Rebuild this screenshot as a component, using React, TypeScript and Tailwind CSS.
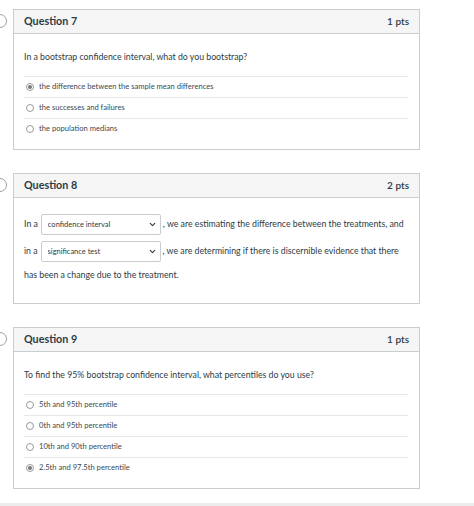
import { ChevronDown } from 'lucide-react';

type Option = { label: string; checked?: boolean };

function Radio({ checked }: { checked?: boolean }) {
  return (
    <span className="w-[8px] h-[8px] rounded-full border border-[#9a9a9a] bg-white flex items-center justify-center shrink-0">
      {checked && <span className="w-[4px] h-[4px] rounded-full bg-[#777]" />}
    </span>
  );
}

function QuestionCard({ title, points, children }: { title: string; points: string; children: React.ReactNode }) {
  return (
    <div className="relative">
      {/* flag marker, clipped by the page edge */}
      <span className="absolute left-[-20px] top-[5px] w-[14px] h-[14px] rounded-full border border-[#9aa0a6] bg-white" />
      <div className="border border-[#c7cdd1] bg-white">
        <div className="h-[24px] bg-[#f5f5f5] border-b border-[#c7cdd1] flex items-center justify-between px-[10px]">
          <span className="text-[10.75px] font-bold text-[#2d3b45]">{title}</span>
          <span className="text-[10px] font-semibold text-[#2d3b45]">{points}</span>
        </div>
        {children}
      </div>
    </div>
  );
}

function OptionList({ options }: { options: Option[] }) {
  return (
    <div>
      {options.map((o) => (
        <div key={o.label} className="h-[21px] border-t border-[#e6e6e6] flex items-center gap-[5px] pl-[2px]">
          <Radio checked={o.checked} />
          <span className="text-[7.6px] text-[#3b4850]">{o.label}</span>
        </div>
      ))}
    </div>
  );
}

function Dropdown({ value }: { value: string }) {
  return (
    <span className="relative inline-block align-middle my-[3px] ml-[3px] mr-[2px]">
      <select
        defaultValue={value}
        className="appearance-none w-[120px] h-[21px] border border-[#c7cdd1] rounded-[2px] bg-white pl-[6px] text-[7.5px] text-[#2d3b45] leading-[19px]"
      >
        <option>{value}</option>
      </select>
      <ChevronDown className="absolute right-[4px] top-[6px] w-[9px] h-[9px] text-[#2d3b45] pointer-events-none" strokeWidth={3} />
    </span>
  );
}

export default function App() {
  return (
    <div className="min-h-[506px] bg-white font-['Lato','Liberation_Sans',sans-serif] text-[#2d3b45] pt-[9px]">
      <div className="ml-[13px] w-[407px] flex flex-col gap-[23px]">
        <QuestionCard title="Question 7" points="1 pts">
          <div className="pt-[15px] pb-[10px] pl-[10px] pr-[11px]">
            <p className="text-[8.75px] leading-[16px] mb-[11px]">In a bootstrap confidence interval, what do you bootstrap?</p>
            <OptionList
              options={[
                { label: 'the difference between the sample mean differences', checked: true },
                { label: 'the successes and failures' },
                { label: 'the population medians' },
              ]}
            />
          </div>
        </QuestionCard>

        <QuestionCard title="Question 8" points="2 pts">
          <div className="pt-[13px] pb-[18px] pl-[10px] pr-[11px]">
            <p className="text-[8.75px] leading-[20px]">
              In a<Dropdown value="confidence interval" />, we are estimating the difference between the treatments, and
              in a<Dropdown value="significance test" />, we are determining if there is discernible evidence that there
              has been a change due to the treatment.
            </p>
          </div>
        </QuestionCard>

        <QuestionCard title="Question 9" points="1 pts">
          <div className="pt-[15px] pb-[10px] pl-[10px] pr-[11px]">
            <p className="text-[8.75px] leading-[16px] mb-[11px]">To find the 95% bootstrap confidence interval, what percentiles do you use?</p>
            <OptionList
              options={[
                { label: '5th and 95th percentile' },
                { label: '0th and 95th percentile' },
                { label: '10th and 90th percentile' },
                { label: '2.5th and 97.5th percentile', checked: true },
              ]}
            />
          </div>
        </QuestionCard>
      </div>
      <div className="mt-[14px] h-[4px] bg-[#ececec]" />
    </div>
  );
}
